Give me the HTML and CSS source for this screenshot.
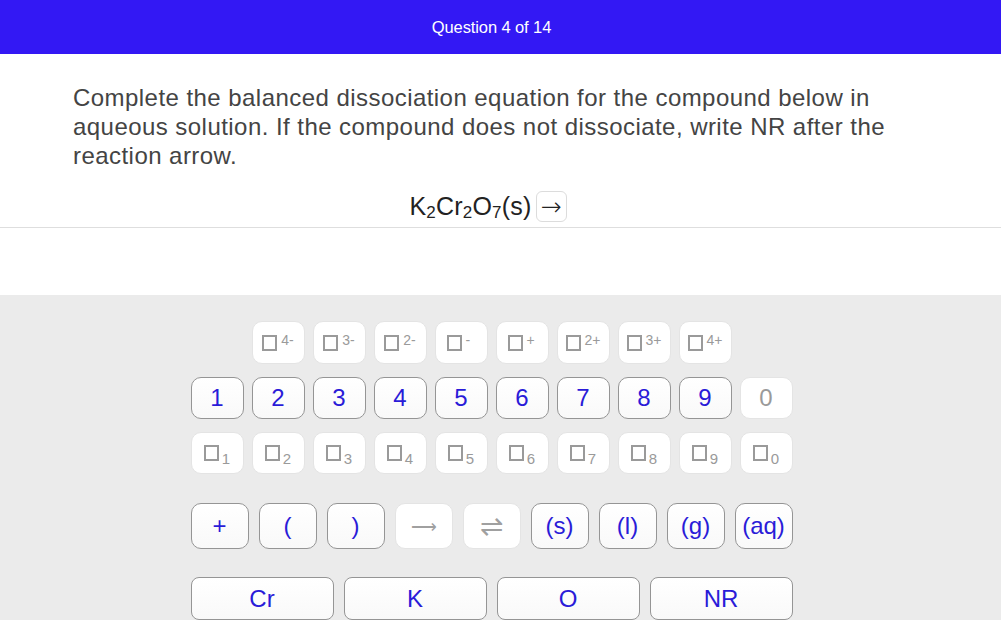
FILE: index.html
```html
<!DOCTYPE html>
<html>
<head>
<meta charset="utf-8">
<link rel="stylesheet" href="styles.css">
</head>
<body>
<header class="topbar"><div class="inner"><span class="qnum">Question 4 of 14</span></div></header>
<main class="question">
  <div class="inner">
    <p class="prompt">Complete the balanced dissociation equation for the compound below in aqueous solution. If the compound does not dissociate, write NR after the reaction arrow.</p>
    <div class="equation">
      <span class="formula">K<sub>2</sub>Cr<sub>2</sub>O<sub>7</sub>(s)</span>
      <span class="arrowbox">→</span>
    </div>
  </div>
</main>
<section class="keypad">
  <div class="inner">
    <div class="row row-charge">
      <button class="key off"><span class="box"></span><sup>4-</sup></button>
      <button class="key off"><span class="box"></span><sup>3-</sup></button>
      <button class="key off"><span class="box"></span><sup>2-</sup></button>
      <button class="key off"><span class="box"></span><sup>-</sup></button>
      <button class="key off"><span class="box"></span><sup>+</sup></button>
      <button class="key off"><span class="box"></span><sup>2+</sup></button>
      <button class="key off"><span class="box"></span><sup>3+</sup></button>
      <button class="key off"><span class="box"></span><sup>4+</sup></button>
    </div>
    <div class="row row-digit">
      <button class="key on">1</button>
      <button class="key on">2</button>
      <button class="key on">3</button>
      <button class="key on">4</button>
      <button class="key on">5</button>
      <button class="key on">6</button>
      <button class="key on">7</button>
      <button class="key on">8</button>
      <button class="key on">9</button>
      <button class="key off">0</button>
    </div>
    <div class="row row-sub">
      <button class="key off"><span class="box"></span><sub>1</sub></button>
      <button class="key off"><span class="box"></span><sub>2</sub></button>
      <button class="key off"><span class="box"></span><sub>3</sub></button>
      <button class="key off"><span class="box"></span><sub>4</sub></button>
      <button class="key off"><span class="box"></span><sub>5</sub></button>
      <button class="key off"><span class="box"></span><sub>6</sub></button>
      <button class="key off"><span class="box"></span><sub>7</sub></button>
      <button class="key off"><span class="box"></span><sub>8</sub></button>
      <button class="key off"><span class="box"></span><sub>9</sub></button>
      <button class="key off"><span class="box"></span><sub>0</sub></button>
    </div>
    <div class="row row-sym">
      <button class="key on">+</button>
      <button class="key on">(</button>
      <button class="key on">)</button>
      <button class="key off arr">⟶</button>
      <button class="key off arr eq">⇌</button>
      <button class="key on">(s)</button>
      <button class="key on">(l)</button>
      <button class="key on">(g)</button>
      <button class="key on">(aq)</button>
    </div>
    <div class="row row-el">
      <button class="key on">Cr</button>
      <button class="key on">K</button>
      <button class="key on">O</button>
      <button class="key on">NR</button>
    </div>
  </div>
</section>
</body>
</html>
```

FILE: styles.css
```css
html, body {
  margin: 0;
  padding: 0;
  background: #ffffff;
  font-family: "Liberation Sans", Arial, sans-serif;
  overflow: hidden;
}
.inner {
  width: 983px;
}
.topbar {
  background: #3318f4;
  height: 54px;
}
.topbar .inner {
  height: 54px;
  display: flex;
  align-items: center;
  justify-content: center;
}
.qnum {
  color: #ffffff;
  font-size: 16.5px;
  letter-spacing: -0.1px;
}
.question {
  border-bottom: 1px solid #dedede;
}
.question .inner {
  padding: 29px 0 5px 73px;
  box-sizing: border-box;
}
.prompt {
  margin: 0;
  color: #444444;
  font-size: 24px;
  letter-spacing: 0.45px;
  line-height: 29px;
  width: 830px;
}
.equation {
  margin-top: 21px;
  display: flex;
  align-items: center;
  justify-content: center;
  padding-right: 80px;
  gap: 4px;
}
.formula {
  font-size: 25px;
  color: #222222;
  letter-spacing: 0.2px;
}
.formula sub {
  font-size: 17px;
  vertical-align: -3px;
  line-height: 0;
}
.arrowbox {
  width: 29px;
  height: 29px;
  border: 1px solid #dcdcdc;
  border-radius: 6px;
  display: flex;
  align-items: center;
  justify-content: center;
  font-family: "DejaVu Sans", sans-serif;
  font-weight: 200;
  font-size: 25px;
  line-height: 1;
  color: #222222;
}
.keypad {
  margin-top: 67px;
  background: #ebebeb;
  height: 325px;
}
.keypad .inner {
  padding-top: 26px;
  display: flex;
  flex-direction: column;
  align-items: center;
}
.row {
  display: flex;
  gap: 8px;
}
.key {
  box-sizing: border-box;
  width: 53px;
  height: 43px;
  border-radius: 10px;
  background: #ffffff;
  font-family: "Liberation Sans", Arial, sans-serif;
  font-size: 24px;
  padding: 0;
  display: flex;
  align-items: center;
  justify-content: center;
  margin: 0;
}
.key.on {
  border: 1px solid #959595;
  color: #2a1bd8;
  background: linear-gradient(#ffffff, #f9f9f9);
}
.key.off {
  border: 1px solid #e4e4e4;
  color: #9a9a9a;
}
.row-digit {
  margin-top: 13px;
}
.row-digit .key {
  height: 42px;
}
.row-sub {
  margin-top: 13px;
}
.row-sub .key {
  height: 42px;
}
.row-sym {
  margin-top: 29px;
  gap: 10px;
}
.row-sym .key {
  width: 58px;
  height: 46px;
}
.row-sym .arr {
  font-family: "DejaVu Sans", sans-serif;
  font-weight: 200;
  font-size: 18px;
  color: #a0a0a0;
}
.row-sym .arr.eq {
  font-size: 28px;
}
.row-el {
  margin-top: 28px;
  gap: 10px;
}
.row-el .key {
  width: 143px;
  height: 43px;
  border-radius: 8px;
}
.box {
  display: inline-block;
  width: 15px;
  height: 16px;
  box-sizing: border-box;
  border: 2px solid #9a9a9a;
}
.key sup {
  font-size: 14px;
  line-height: 1;
  align-self: flex-start;
  margin-top: 11px;
  margin-left: 4px;
  min-width: 10px;
  text-align: left;
}
.key sub {
  font-size: 15px;
  line-height: 1;
  align-self: flex-end;
  margin-bottom: 7px;
  margin-left: 3px;
}
```
